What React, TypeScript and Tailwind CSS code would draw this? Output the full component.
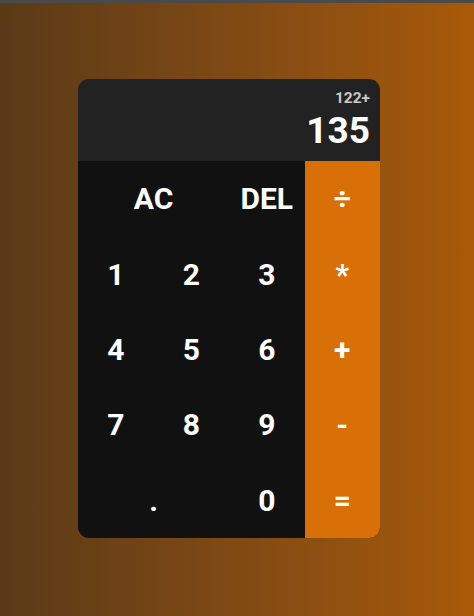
import React from 'react';

const font = { fontFamily: 'Roboto, "Liberation Sans", sans-serif' };

interface Key {
  label: string;
  span?: boolean;
  op?: boolean;
}

const keys: Key[] = [
  { label: 'AC', span: true },
  { label: 'DEL' },
  { label: '÷', op: true },
  { label: '1' },
  { label: '2' },
  { label: '3' },
  { label: '*', op: true },
  { label: '4' },
  { label: '5' },
  { label: '6' },
  { label: '+', op: true },
  { label: '7' },
  { label: '8' },
  { label: '9' },
  { label: '-', op: true },
  { label: '.', span: true },
  { label: '0' },
  { label: '=', op: true },
];

export default function App() {
  return (
    <div className="min-h-[616px] flex flex-col bg-gradient-to-r from-[#5a3a17] to-[#a85a07]" style={font}>
      <div className="h-[3px] bg-[#4a4a4a]" />
      <div className="flex-1 flex items-center justify-center pr-[16px] pb-[2px]">
        <div className="w-[302px] rounded-[11px] overflow-hidden">
          <div className="h-[82px] bg-[#222222] flex flex-col items-end justify-end px-[10px] pb-[12px]">
            <div className="text-[15.5px] font-bold text-[#c9c9c9] leading-none mb-[6px]">122+</div>
            <div className="text-[37px] font-bold text-white leading-none">135</div>
          </div>
          <div className="grid grid-cols-4 bg-[#111111]">
            {keys.map((k, i) => (
              <button
                key={i}
                className={`h-[75.4px] flex items-center justify-center font-bold text-white text-[30px] ${
                  k.span ? 'col-span-2' : ''
                } ${k.op ? 'bg-[#d97007]' : ''}`}
              >
                {k.label}
              </button>
            ))}
          </div>
        </div>
      </div>
    </div>
  );
}
